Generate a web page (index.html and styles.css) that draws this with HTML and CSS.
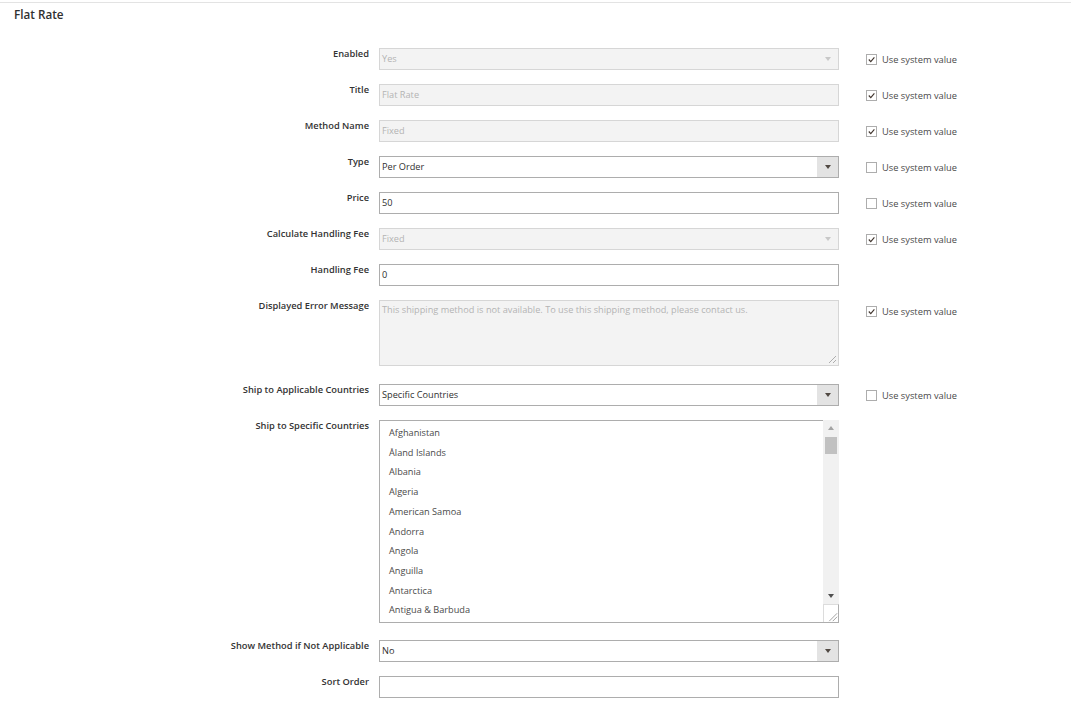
FILE: index.html
```html
<!DOCTYPE html>
<html lang="en">
<head>
<meta charset="utf-8">
<title>Flat Rate</title>
<link rel="stylesheet" href="styles.css">
</head>
<body>
<div class="page">
  <h2 class="section-title">Flat Rate</h2>
  <div class="form">

    <div class="row">
      <div class="label">Enabled</div>
      <div class="control"><div class="field select disabled">Yes<span class="arrow"></span></div></div>
      <div class="inherit"><span class="cb checked"><svg viewBox="0 0 10 10"><polyline points="2,5 4.2,7.3 8.2,2.6"/></svg></span>Use system value</div>
    </div>

    <div class="row">
      <div class="label">Title</div>
      <div class="control"><div class="field disabled">Flat Rate</div></div>
      <div class="inherit"><span class="cb checked"><svg viewBox="0 0 10 10"><polyline points="2,5 4.2,7.3 8.2,2.6"/></svg></span>Use system value</div>
    </div>

    <div class="row">
      <div class="label">Method Name</div>
      <div class="control"><div class="field disabled">Fixed</div></div>
      <div class="inherit"><span class="cb checked"><svg viewBox="0 0 10 10"><polyline points="2,5 4.2,7.3 8.2,2.6"/></svg></span>Use system value</div>
    </div>

    <div class="row">
      <div class="label">Type</div>
      <div class="control"><div class="field select">Per Order<span class="arrow"></span></div></div>
      <div class="inherit"><span class="cb"></span>Use system value</div>
    </div>

    <div class="row">
      <div class="label">Price</div>
      <div class="control"><div class="field">50</div></div>
      <div class="inherit"><span class="cb"></span>Use system value</div>
    </div>

    <div class="row">
      <div class="label">Calculate Handling Fee</div>
      <div class="control"><div class="field select disabled">Fixed<span class="arrow"></span></div></div>
      <div class="inherit"><span class="cb checked"><svg viewBox="0 0 10 10"><polyline points="2,5 4.2,7.3 8.2,2.6"/></svg></span>Use system value</div>
    </div>

    <div class="row">
      <div class="label">Handling Fee</div>
      <div class="control"><div class="field">0</div></div>
      <div class="inherit"></div>
    </div>

    <div class="row row-textarea">
      <div class="label">Displayed Error Message</div>
      <div class="control"><div class="field textarea disabled">This shipping method is not available. To use this shipping method, please contact us.<svg class="grip" viewBox="0 0 10 10"><line x1="2" y1="9" x2="9" y2="2"/><line x1="6" y1="9" x2="9" y2="6"/></svg></div></div>
      <div class="inherit inherit-top"><span class="cb checked"><svg viewBox="0 0 10 10"><polyline points="2,5 4.2,7.3 8.2,2.6"/></svg></span>Use system value</div>
    </div>

    <div class="row">
      <div class="label">Ship to Applicable Countries</div>
      <div class="control"><div class="field select">Specific Countries<span class="arrow"></span></div></div>
      <div class="inherit"><span class="cb"></span>Use system value</div>
    </div>

    <div class="row row-multi">
      <div class="label">Ship to Specific Countries</div>
      <div class="control">
        <div class="multiselect">
          <ul class="options">
            <li>Afghanistan</li>
            <li>Åland Islands</li>
            <li>Albania</li>
            <li>Algeria</li>
            <li>American Samoa</li>
            <li>Andorra</li>
            <li>Angola</li>
            <li>Anguilla</li>
            <li>Antarctica</li>
            <li>Antigua &amp; Barbuda</li>
          </ul>
          <div class="scrollcol">
            <div class="scrollbar">
              <span class="sb-up"></span>
              <span class="sb-thumb"></span>
              <span class="sb-fill"></span>
              <span class="sb-down"></span>
            </div>
            <div class="corner"><svg viewBox="0 0 16 16"><line x1="6" y1="15" x2="15" y2="6"/><line x1="10" y1="15" x2="15" y2="10"/></svg></div>
          </div>
        </div>
      </div>
      <div class="inherit"></div>
    </div>

    <div class="row">
      <div class="label">Show Method if Not Applicable</div>
      <div class="control"><div class="field select">No<span class="arrow"></span></div></div>
      <div class="inherit"></div>
    </div>

    <div class="row">
      <div class="label">Sort Order</div>
      <div class="control"><div class="field"></div></div>
      <div class="inherit"></div>
    </div>

  </div>
</div>
</body>
</html>
```

FILE: styles.css
```css
* { box-sizing: border-box; }

html, body {
  margin: 0;
  padding: 0;
  background: #ffffff;
}

body {
  font-family: "Open Sans", "Noto Sans", "Liberation Sans", sans-serif;
  color: #303030;
}

.page {
  margin-top: 2px;
  border-top: 1px solid #e3e3e3;
  min-height: 700px;
}

.section-title {
  margin: 0;
  padding: 4px 14px 0;
  font-size: 11.7px;
  line-height: 14px;
  font-weight: 600;
  color: #303030;
}

.form {
  display: flex;
  flex-direction: column;
  gap: 14px;
  padding-top: 27px;
}

.row {
  display: grid;
  grid-template-columns: 369px 460px 1fr;
  column-gap: 10px;
  align-items: start;
}

.row-textarea { margin-bottom: 4px; }
.row-multi { margin-bottom: 3px; }

.label {
  text-align: right;
  font-size: 9.3px;
  line-height: 11px;
  font-weight: 600;
  color: #333333;
  padding-top: 0;
}

.field {
  position: relative;
  height: 22px;
  border: 1px solid #adadad;
  background: #ffffff;
  font-size: 9.2px;
  line-height: 20px;
  padding: 0 2px;
  color: #303030;
  white-space: nowrap;
  overflow: hidden;
}

.field.disabled {
  background: #f3f3f3;
  border-color: #d6d6d6;
  color: #b4b4b4;
}

.select .arrow {
  position: absolute;
  top: 0;
  right: 0;
  width: 21px;
  height: 20px;
  background: #e3e3e3;
  display: flex;
  align-items: center;
  justify-content: center;
}

.select .arrow::after {
  content: "";
  display: block;
  width: 0;
  height: 0;
  border-left: 3px solid transparent;
  border-right: 3px solid transparent;
  border-top: 4px solid #514943;
}

.select.disabled .arrow {
  background: transparent;
}

.select.disabled .arrow::after {
  border-top-color: #c8c8c8;
}

.field.textarea {
  height: 66px;
  line-height: 12px;
  padding-top: 3px;
  white-space: normal;
}

.grip {
  position: absolute;
  right: 1px;
  bottom: 1px;
  width: 10px;
  height: 10px;
}

.grip line {
  stroke: #9a9a9a;
  stroke-width: 0.8;
}

.inherit {
  display: flex;
  align-items: center;
  height: 22px;
  padding-left: 17px;
  font-size: 9.3px;
  color: #4a4a4a;
  white-space: nowrap;
}

.inherit-top {
  height: 22px;
}

.cb {
  width: 11px;
  height: 11px;
  border: 1px solid #adadad;
  background: #ffffff;
  margin-right: 5px;
  flex: none;
  display: flex;
}

.cb svg {
  width: 9px;
  height: 9px;
}

.cb polyline {
  fill: none;
  stroke: #41362f;
  stroke-width: 1.3;
}

.multiselect {
  display: flex;
  height: 203px;
  border: 1px solid #adadad;
  background: #ffffff;
}

.options {
  list-style: none;
  margin: 0;
  padding: 2px 0 0 9px;
  flex: 1;
  overflow: hidden;
}

.options li {
  font-size: 9.2px;
  line-height: 19.7px;
  color: #4a4a4a;
  white-space: nowrap;
}

.scrollcol {
  width: 16px;
  display: flex;
  flex-direction: column;
  margin-top: -1px;
  margin-right: -1px;
}

.scrollbar {
  flex: 1;
  background: #f1f1f1;
  display: flex;
  flex-direction: column;
  align-items: center;
  padding-top: 6px;
}

.sb-up {
  width: 0;
  height: 0;
  border-left: 3.5px solid transparent;
  border-right: 3.5px solid transparent;
  border-bottom: 4px solid #a3a3a3;
}

.sb-thumb {
  margin-top: 7px;
  width: 12px;
  height: 17px;
  background: #c1c1c1;
}

.sb-fill { flex: 1; }

.sb-down {
  width: 0;
  height: 0;
  border-left: 3.5px solid transparent;
  border-right: 3.5px solid transparent;
  border-top: 4px solid #505050;
  margin-bottom: 6px;
}

.corner {
  height: 18px;
  border-top: 1px solid #dcdcdc;
  border-left: 1px solid #dcdcdc;
  border-right: 1px solid #adadad;
  background: #ffffff;
  display: flex;
  align-items: flex-end;
  justify-content: flex-end;
}

.corner svg {
  width: 14px;
  height: 14px;
}

.corner line {
  stroke: #7a7a7a;
  stroke-width: 0.8;
}
```
